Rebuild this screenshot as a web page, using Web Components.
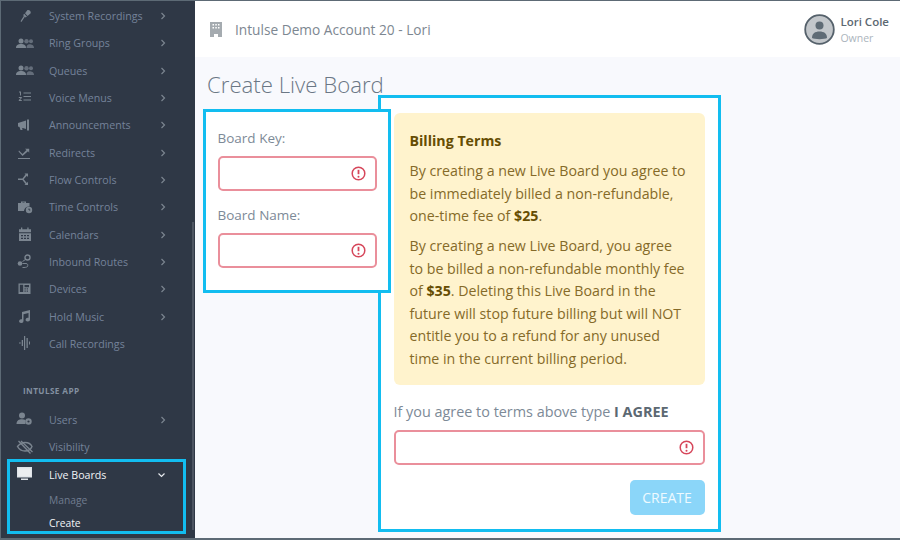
<!DOCTYPE html>
<html lang="en"><head><meta charset="utf-8"><title>Create Live Board</title>
<style>
html,body{margin:0;padding:0;width:900px;height:540px;overflow:hidden;background:#f8f9fd;font-family:"Open Sans","Noto Sans",sans-serif}
</style></head><body>
<app-shell>
  <side-nav slot="nav">
    <nav-item icon="mic" arrow="r">System Recordings</nav-item>
    <nav-item icon="group" arrow="r">Ring Groups</nav-item>
    <nav-item icon="group" arrow="r">Queues</nav-item>
    <nav-item icon="list" arrow="r">Voice Menus</nav-item>
    <nav-item icon="horn" arrow="r">Announcements</nav-item>
    <nav-item icon="redirect" arrow="r">Redirects</nav-item>
    <nav-item icon="flow" arrow="r">Flow Controls</nav-item>
    <nav-item icon="case" arrow="r">Time Controls</nav-item>
    <nav-item icon="cal" arrow="r">Calendars</nav-item>
    <nav-item icon="route" arrow="r">Inbound Routes</nav-item>
    <nav-item icon="device" arrow="r">Devices</nav-item>
    <nav-item icon="music" arrow="r">Hold Music</nav-item>
    <nav-item icon="wave">Call Recordings</nav-item>
    <nav-head>INTULSE APP</nav-head>
    <nav-item icon="user" arrow="r">Users</nav-item>
    <nav-item icon="eye">Visibility</nav-item>
    <nav-mark>
      <nav-item icon="monitor" arrow="d" active>Live Boards</nav-item>
      <nav-sub>Manage</nav-sub>
      <nav-sub active>Create</nav-sub>
    </nav-mark>
  </side-nav>
  <top-bar slot="top"></top-bar>
  <create-page slot="main"></create-page>
</app-shell>
<script>
const def=(n,html)=>customElements.define(n,class extends HTMLElement{
  connectedCallback(){ if(this.shadowRoot)return; const s=this.attachShadow({mode:'open'}); s.innerHTML=typeof html==='function'?html(this):html; }
});
const IC={
 mic:'<path d="M11.500 2a2.600 2.600 0 0 1 3.200 3.200L11.600 8 9 5.200zM8.200 5.800l2.700 2.800-1.200.9-.8-.8-3.500 5.300-.9-.8 3.300-5.200-.6-.9z"/>',
 group:'<circle cx="5" cy="5" r="2.500"/><circle cx="10.500" cy="5.200" r="2.200" opacity=".7"/><circle cx="15" cy="5.200" r="2" opacity=".7"/><path d="M0 12c0-3 2-4 5-4s5 1 5 4z"/><path d="M10.500 12c0-2.600 1-3.800 3-3.800s4.500.8 4.500 3.800z" opacity=".7"/>',
 list:'<path d="M3 1.500h2v4H4V2.500H3zM2.800 7h3v1L4.200 10h1.600v1h-3v-1l1.900-2H2.800zM7.500 2.500h7.500v1H7.500zM7.500 6h7.500v1H7.500zM7.500 9.500h7.500v1H7.500z"/>',
 horn:'<path d="M2 5l8-2.500v8.500L2 8.500zM3.500 9h2.500l.5 3H4.500zM11 1.500h2v11h-2z"/>',
 redirect:'<path d="M2 13h12v1H2zM3 5.500l3.500 3.500 4-4-1.500-1.300h4.200v4.100L12 6.200 6.500 11 2.500 6.500z"/>',
 flow:'<path d="M2 6.500h4.500l3-4-1-1h3.500v3.500l-1.200-1.200L7.700 7.200l3.100 3.700 1.200-1.200V13H8.500l1-1-3-4H2z"/>',
 case:'<path d="M5 3V1.500h5V3h3.500v3.500A5 5 0 0 0 8 11H2V3zM6.500 2.500V3h2v-.5z"/><circle cx="13" cy="10" r="3.200"/><path d="M13 8.500V10h1.300" stroke="#2f3846" fill="none"/>',
 cal:'<path d="M5 .5h1.300v1.800h5V.5h1.300v1.800H15v3H3v-3h2zM3 6.200h12V14H3z"/><path d="M5 8h2v1.300H5zm3 0h2v1.300H8zm3 0h2v1.300h-2zm-6 2.700h2V12H5zm3 0h2V12H8zm3 0h2V12h-2z" fill="#2f3846"/>',
 route:'<circle cx="11.500" cy="3.500" r="2.500" fill="none" stroke="currentColor" stroke-width="1.400"/><circle cx="4" cy="9.500" r="2.300"/><path d="M6.500 9.500H10c2 0 2 2 1.500 3-1 1-3 1-5 1" fill="none" stroke="currentColor"/><path d="M9.500 5.500l-3 2" stroke="currentColor"/>',
 device:'<path fill-rule="evenodd" d="M2.500 1.500h12v10.500h-12zM3.800 2.700v7.300h3.400V2.700zM8.500 3v2.200h4.500V3zM8.500 6.300v1.200h1.200V6.300zm2.200 0v1.200h1.200V6.300zM8.500 8.500v1.300h1.200V8.500zm2.200 0v1.300h1.200V8.500z"/>',
 music:'<path d="M6 3l8-2v9.500a2.200 1.900 0 1 1-1.500-1.700V4L7.500 5.200V12a2.200 1.900 0 1 1-1.500-1.700z"/>',
 wave:'<path d="M8 0h1.200v14H8zM10.500 2h1.300v10h-1.300zM5.700 4H7v6H5.700zM13 5.500h1v3h-1zM3 6.500h1.800v1H3z"/>',
 user:'<circle cx="6" cy="3.500" r="3"/><path d="M.5 12c0-3.500 2.500-4.800 5.500-4.800 1.300 0 2.500.2 3.500.8v4z"/><circle cx="12.500" cy="9.500" r="3.200"/><circle cx="12.500" cy="9.500" r="1.100" fill="#2f3846"/>',
 eye:'<path d="M1.500 6.500C4 3.500 7 2.500 9 2.500c3 0 6 1.800 7 4-1 2.500-4 4.500-7 4.500-3 0-6-1.800-7.500-4.500z" fill="none" stroke="currentColor" stroke-width="1.400"/><path d="M2.500 1l12 12.500M5 1l11.500 11" stroke="currentColor" stroke-width="1.300"/>',
 monitor:'<path d="M1 0h15v10.500H1z"/><path d="M2.300 1.300h12.400v8H2.300z" fill="#eceef1"/><path d="M5 11.500h7V13H5z"/>'
};
def('nav-item',h=>{
 const a=h.getAttribute('arrow'),act=h.hasAttribute('active');
 const ic=act?'#dfe3e8':'#7b8590';
 return `<style>:host{display:flex;align-items:center;height:27.33px;color:${act?'#f2f4f6':'#75839a'};font-size:10.650px;position:relative}
 .i{width:49px;flex:none;display:flex;justify-content:center}
 svg.ic{display:block;height:15px;width:18px;fill:${ic};color:${ic}}
 .t{flex:1;white-space:nowrap}.a{width:36px;flex:none}
 .a svg{display:block;width:8px;height:8px;fill:none;stroke:${act?'#e6e9ee':'#7b8590'};stroke-width:1.200}
 </style><span class="i"><svg class="ic" viewBox="0 0 18 15">${IC[h.getAttribute('icon')]}</svg></span><span class="t"><slot></slot></span>
 <span class="a">${a==='r'?'<svg viewBox="0 0 8 8"><path d="M2.500 1l3 3-3 3"/></svg>':a==='d'?'<svg viewBox="0 0 8 8" style="width:9px;margin-left:-1px"><path d="M1 2.500l3 3 3-3"/></svg>':''}</span>`});
def('nav-head',`<style>:host{display:block;margin:26px 0 0 23px;height:22.500px;font-size:8.200px;font-weight:700;letter-spacing:.4px;color:#8390a1;line-height:14px}</style><slot></slot>`);
def('nav-sub',h=>`<style>:host{display:flex;align-items:center;height:23.500px;padding-left:39px;font-size:10.300px;color:${h.hasAttribute('active')?'#f2f4f6':'#6f7c90'}}</style><slot></slot>`);
def('nav-mark',`<style>:host{display:block;box-sizing:border-box;width:179px;height:75px;margin:-2px 0 0 7px;border:3px solid #12bdf0}
 ::slotted(nav-item){margin:-.5px -11px -.5px -10px}</style><slot></slot>`);
def('side-nav',`<style>:host{display:block;box-sizing:border-box;width:195px;height:100%;background:#2f3846;padding-top:1.300px;position:relative;border-left:1px solid #5d6a75}
 .sb{position:absolute;right:1px;top:221px;bottom:8px;width:2px;background:#4d5562}
 .w{margin-left:-1px}</style><div class="sb"></div><div class="w"><slot></slot></div>`);
const err=`<svg width="15" height="15" viewBox="0 0 15 15"><circle cx="7.500" cy="7.500" r="6.300" fill="none" stroke="#d6465a" stroke-width="1.500"/><path d="M7.500 3.800v4.400" stroke="#d6465a" stroke-width="1.800"/><circle cx="7.500" cy="10.700" r="1" fill="#d6465a"/></svg>`;
def('err-input',`<style>:host{display:flex;align-items:center;justify-content:flex-end;box-sizing:border-box;height:35px;border:2px solid #ea8f9b;border-radius:5px;background:#fff;padding-right:9px}</style>${err}`);
def('top-bar',`<style>:host{display:flex;align-items:center;height:56px;background:#fff;padding:0 11px 0 15px;color:#7d8791}
 .n{font-size:13.700px;margin-left:13px;flex:1}
 .u{display:flex;align-items:center;gap:5px}
 .a{display:block}.l{display:flex;flex-direction:column;font-size:10.500px;line-height:16px;position:relative;top:1px}
 b{font-size:11.500px;color:#5c6872;font-weight:600}.o{color:#acb5bd}</style>
 <svg width="12" height="16" viewBox="0 0 12 16"><path fill="#a5abb0" fill-rule="evenodd" d="M0 1h12v15H8v-3H4v3H0zM2.500 3v1.500h1.500V3zm2.800 0v1.500h1.500V3zM8 3v1.500h1.500V3zM2.500 6v1.500h1.500V6zm2.800 0v1.500h1.500V6zM8 6v1.500h1.500V6z"/></svg>
 <span class="n">Intulse Demo Account 20 - Lori</span>
 <div class="u"><svg class="a" width="31" height="31" viewBox="0 0 31 31"><circle cx="15.500" cy="15.500" r="14.300" fill="#c3c7cb" stroke="#55616b" stroke-width="1.800"/><circle cx="15.500" cy="11.500" r="4" fill="#5f6b75"/><path d="M8 24c0-4.500 3-6.500 7.500-6.500S23 19.500 23 24c-2 1.500-13 1.500-15 0z" fill="#5f6b75"/></svg>
 <div class="l"><b>Lori Cole</b><span class="o">Owner</span></div></div>`);
def('left-card',`<style>:host{display:flex;flex-direction:column;box-sizing:border-box;width:188px;height:183.500px;margin-top:14px;border:3.500px solid #12bdf0;background:#fff;padding:16px 11px 0 11.500px;position:relative;z-index:1;flex:none;color:#7d8a97;font-size:13.500px}
 label{display:block;line-height:20px;margin-bottom:7.500px}err-input{margin-bottom:14.500px}
 </style><label>Board Key:</label><err-input></err-input><label>Board Name:</label><err-input></err-input>`);
def('terms-box',`<style>:host{display:block;box-sizing:border-box;height:272px;background:#fff3cd;border-radius:6px;padding:16px;color:#856a28;font-size:14.200px;line-height:22.500px;white-space:nowrap}
 h4{margin:0 0 7.300px;font-size:14.200px;font-weight:700;color:#664d03;line-height:24px}p{margin:0 0 7.500px}b{color:#664d03;font-weight:700}</style>
 <h4>Billing Terms</h4>
 <p>By creating a new Live Board you agree to<br>be immediately billed a non-refundable,<br>one-time fee of <b>$25</b>.</p>
 <p>By creating a new Live Board, you agree<br>to be billed a non-refundable monthly fee<br>of <b>$35</b>. Deleting this Live Board in the<br>future will stop future billing but will NOT<br>entitle you to a refund for any unused<br>time in the current billing period.</p>`);
def('right-card',`<style>:host{display:flex;flex-direction:column;box-sizing:border-box;width:342.500px;height:436.500px;margin-left:-13px;border:3.500px solid #12bdf0;background:#fff;padding:15px 13px 0 12.500px;flex:none;color:#7d8a97;font-size:14.400px}
 label{display:block;margin:17px 0 8px;line-height:20px;white-space:nowrap}b{color:#5c6872;font-weight:700}
 .b{align-self:flex-end;margin-top:15px;width:75px;height:35px;background:#8bd6f9;border-radius:5px;color:#eefaff;font-size:14px;display:flex;align-items:center;justify-content:center}</style>
 <terms-box></terms-box><label>If you agree to terms above type <b>I AGREE</b></label><err-input></err-input><div class="b">CREATE</div>`);
def('create-page',`<style>:host{display:block;padding:13px 0 0 8px}
 h1{margin:0 0 0 4px;font-weight:300;font-size:22.200px;line-height:30px;color:#6b7785;height:25px}
 .r{display:flex;align-items:flex-start}</style>
 <h1>Create Live Board</h1><div class="r"><left-card></left-card><right-card></right-card></div>`);
def('app-shell',`<style>:host{display:flex;width:900px;height:540px;box-sizing:border-box;border-top:1.500px solid #5d6a75;border-bottom:2px solid #5d6a75;overflow:hidden;background:#f8f9fd}
 .m{flex:1;display:flex;flex-direction:column;min-width:0}
 .c{flex:1}</style><slot name="nav"></slot><div class="m"><slot name="top"></slot><div class="c"><slot name="main"></slot></div></div>`);
</script>
</body></html>
